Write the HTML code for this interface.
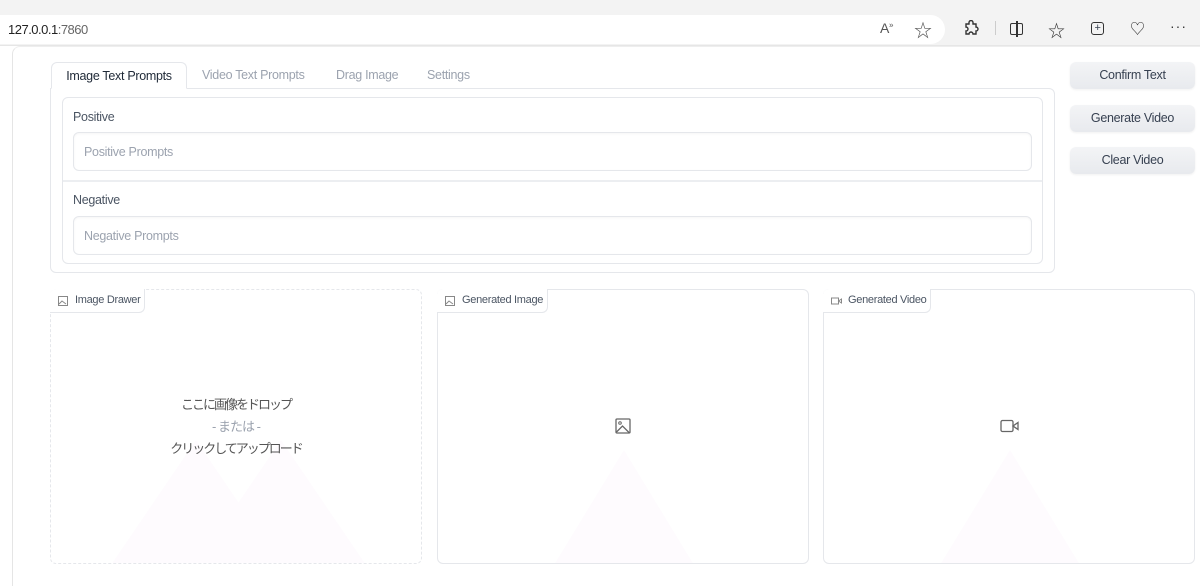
<!DOCTYPE html>
<html><head><meta charset="utf-8"><style>
*{box-sizing:border-box;margin:0;padding:0}
body{width:1200px;height:576px;overflow:hidden;background:#fff;font-family:"Liberation Sans","Noto Sans CJK JP",sans-serif;position:relative;color:#374151;letter-spacing:-0.3px}
.abs{position:absolute}
.top{left:0;top:0;width:1200px;height:46px;background:#f3f3f3;border-bottom:1px solid #e6e6e6}
.addr{left:0;top:15px;width:945px;height:29px;background:#fff;border-radius:0 15px 15px 0}
.addr span{position:absolute;left:8px;top:7px;font-size:13px;color:#222;letter-spacing:-0.5px}
.page{left:12px;top:46px;width:1200px;height:540px;border-left:1px solid #e5e5e5;border-top:1px solid #eee;border-radius:8px 0 0 0;background:#fff}
.tab{top:62px;height:27px;font-size:12.5px;color:#9ca3af;line-height:27px}
.tabsel{left:51px;width:136px;border:1px solid #e5e7eb;border-bottom:1px solid #fff;border-radius:6px 6px 0 0;color:#1f2937;text-align:center;background:#fff;z-index:2}
.panel{left:50px;top:88px;width:1005px;height:185px;border:1px solid #e5e7eb;border-radius:0 6px 6px 6px}
.inner{left:62px;top:97px;width:981px;height:167px;border:1px solid #e5e7eb;border-radius:6px}
.lbl{font-size:12.5px;color:#4b5563}
.ta{left:73px;width:959px;height:39px;border:1px solid #e5e7eb;border-radius:6px;font-size:12.5px;color:#9ca3af;padding:12px 10px;box-shadow:inset 0 1px 2px rgba(0,0,0,.04)}
.btn{left:1070px;width:125px;height:27px;background:linear-gradient(#f3f4f6,#e8eaee);border-radius:6px;font-size:12.5px;color:#374151;text-align:center;line-height:27px;box-shadow:0 1px 2px rgba(0,0,0,.06)}
.box{top:289px;height:275px;border:1px dashed #e5e7eb;border-radius:6px;overflow:hidden}
.tag{top:289px;height:24px;border:1px solid #e5e7eb;border-top:none;border-left:none;border-radius:0 0 6px 0;font-size:11px;color:#4b5563;line-height:23px;padding-left:25px;padding-right:4px;background:#fff;border-top-left-radius:6px}
.tag svg{position:absolute;left:8px;top:7px}
.tri{position:absolute;width:0;height:0;border-style:solid;border-color:transparent transparent #fefbfe transparent}
</style></head><body>
<div class="abs top"></div>
<div class="abs addr"><span>127.0.0.1<span style="position:static;color:#666">:7860</span></span></div>
<div class="abs" style="left:880px;top:20px;font-size:14px;color:#555">A<sup style="font-size:8px">»</sup></div>
<div class="abs" style="left:914px;top:17px;font-size:18px;color:#555">☆</div>
<svg class="abs" style="left:963px;top:20px" width="17" height="17" viewBox="0 0 17 17"><path d="M6 2.5a2 2 0 0 1 4 0V4h3v3a2 2 0 0 1 0 4v3H10a2 2 0 0 0-4 0H3v-3a2 2 0 0 0 0-4V4h3z" fill="none" stroke="#333" stroke-width="1.4"/></svg>
<div class="abs" style="left:995px;top:21px;width:1px;height:14px;background:#ccc"></div>
<div class="abs" style="left:1010px;top:23px;width:13px;height:12px;border:1.5px solid #333;border-radius:2px"></div>
<div class="abs" style="left:1016px;top:21px;width:1.5px;height:16px;background:#333"></div>
<div class="abs" style="left:1048px;top:17px;font-size:17px;color:#333">☆</div>
<div class="abs" style="left:1091px;top:22px;width:13px;height:13px;border:1.5px solid #333;border-radius:3px;font-size:11px;line-height:10px;text-align:center">+</div>
<div class="abs" style="left:1130px;top:18px;font-size:15px;color:#333">♡</div>
<div class="abs" style="left:1170px;top:18px;font-size:14px;color:#333;letter-spacing:1px">···</div>
<div class="abs page"></div>

<div class="abs tab tabsel">Image Text Prompts</div>
<div class="abs tab" style="left:202px">Video Text Prompts</div>
<div class="abs tab" style="left:336px">Drag Image</div>
<div class="abs tab" style="left:427px">Settings</div>
<div class="abs panel"></div>
<div class="abs inner"></div>
<div class="abs" style="left:63px;top:180px;width:979px;height:2px;background:#eceef1"></div>
<div class="abs lbl" style="left:73px;top:110px">Positive</div>
<div class="abs ta" style="top:132px">Positive Prompts</div>
<div class="abs lbl" style="left:73px;top:193px">Negative</div>
<div class="abs ta" style="top:216px">Negative Prompts</div>

<div class="abs btn" style="top:62px">Confirm Text</div>
<div class="abs btn" style="top:105px">Generate Video</div>
<div class="abs btn" style="top:147px">Clear Video</div>

<div class="abs box" style="left:50px;width:372px">
 <div class="tri" style="left:60px;top:150px;border-width:0 85px 125px 85px"></div>
 <div class="tri" style="left:145px;top:150px;border-width:0 85px 125px 85px"></div>
</div>
<div class="abs tag" style="left:50px"><svg width="10" height="10" viewBox="0 0 10 10"><rect x=".5" y=".5" width="9" height="9" fill="none" stroke="#888"/><path d="M1 8l3-3 4 3" fill="none" stroke="#888"/></svg>Image Drawer</div>
<div class="abs" style="left:50px;width:372px;top:394px;text-align:center;font-size:13px;line-height:22px;color:#555;letter-spacing:-2px">ここに画像をドロップ<br><span style="color:#9ca3af;letter-spacing:-1px">- または -</span><br>クリックしてアップロード</div>

<div class="abs box" style="left:437px;width:372px;border-style:solid">
 <div class="tri" style="left:116px;top:160px;border-width:0 70px 115px 70px"></div>
</div>
<div class="abs tag" style="left:437px"><svg width="10" height="10" viewBox="0 0 10 10"><rect x=".5" y=".5" width="9" height="9" fill="none" stroke="#888"/><path d="M1 8l3-3 4 3" fill="none" stroke="#888"/></svg>Generated Image</div>
<svg class="abs" style="left:615px;top:418px" width="16" height="16" viewBox="0 0 16 16"><rect x="1" y="1" width="14" height="14" rx="1" fill="none" stroke="#666" stroke-width="1.3"/><circle cx="5" cy="5" r="1.3" fill="none" stroke="#666"/><path d="M1.5 14l6-6 7 7" fill="none" stroke="#666" stroke-width="1.3"/></svg>

<div class="abs box" style="left:823px;width:372px;border-style:solid">
 <div class="tri" style="left:116px;top:160px;border-width:0 70px 115px 70px"></div>
</div>
<div class="abs tag" style="left:823px"><svg width="11" height="10" viewBox="0 0 11 10"><rect x=".5" y="2" width="7" height="6" fill="none" stroke="#888"/><path d="M7.5 5l3-2v4z" fill="none" stroke="#888"/></svg>Generated Video</div>
<svg class="abs" style="left:1000px;top:419px" width="19" height="14" viewBox="0 0 19 14"><rect x="1" y="1.5" width="12" height="11" rx="1.5" fill="none" stroke="#666" stroke-width="1.3"/><path d="M13 7l5-3.5v7z" fill="none" stroke="#666" stroke-width="1.3"/></svg>
</body></html>
